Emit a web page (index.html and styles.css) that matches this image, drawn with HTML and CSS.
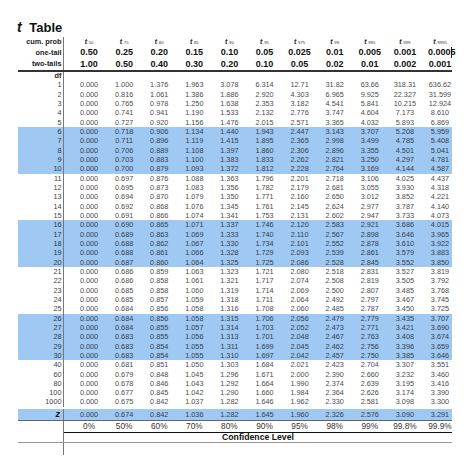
FILE: index.html
```html
<!DOCTYPE html>
<html lang="en">
<head>
<meta charset="utf-8">
<title>t Table</title>
<link rel="stylesheet" href="styles.css">
</head>
<body>
<div class="page">
  <h1 class="title"><span class="title-t">t</span> Table</h1>
  <div class="table">
    <div class="r ha"><span class="lab">cum. prob</span><span><span class="tv">t</span><span class="ts">.50</span></span><span><span class="tv">t</span><span class="ts">.75</span></span><span><span class="tv">t</span><span class="ts">.80</span></span><span><span class="tv">t</span><span class="ts">.85</span></span><span><span class="tv">t</span><span class="ts">.90</span></span><span><span class="tv">t</span><span class="ts">.95</span></span><span><span class="tv">t</span><span class="ts">.975</span></span><span><span class="tv">t</span><span class="ts">.99</span></span><span><span class="tv">t</span><span class="ts">.995</span></span><span><span class="tv">t</span><span class="ts">.999</span></span><span><span class="tv">t</span><span class="ts">.9995</span></span></div>
    <div class="r hb"><span class="lab">one-tail</span><span>0.50</span><span>0.25</span><span>0.20</span><span>0.15</span><span>0.10</span><span>0.05</span><span>0.025</span><span>0.01</span><span>0.005</span><span>0.001</span><span class="cur">0.0005</span></div>
    <div class="r hc"><span class="lab">two-tails</span><span>1.00</span><span>0.50</span><span>0.40</span><span>0.30</span><span>0.20</span><span>0.10</span><span>0.05</span><span>0.02</span><span>0.01</span><span>0.002</span><span>0.001</span></div>
    <div class="r df"><span class="lab">df</span></div>
    <div class="r"><span>1</span><span>0.000</span><span>1.000</span><span>1.376</span><span>1.963</span><span>3.078</span><span>6.314</span><span>12.71</span><span>31.82</span><span>63.66</span><span>318.31</span><span>636.62</span></div>
    <div class="r"><span>2</span><span>0.000</span><span>0.816</span><span>1.061</span><span>1.386</span><span>1.886</span><span>2.920</span><span>4.303</span><span>6.965</span><span>9.925</span><span>22.327</span><span>31.599</span></div>
    <div class="r"><span>3</span><span>0.000</span><span>0.765</span><span>0.978</span><span>1.250</span><span>1.638</span><span>2.353</span><span>3.182</span><span>4.541</span><span>5.841</span><span>10.215</span><span>12.924</span></div>
    <div class="r"><span>4</span><span>0.000</span><span>0.741</span><span>0.941</span><span>1.190</span><span>1.533</span><span>2.132</span><span>2.776</span><span>3.747</span><span>4.604</span><span>7.173</span><span>8.610</span></div>
    <div class="r"><span>5</span><span>0.000</span><span>0.727</span><span>0.920</span><span>1.156</span><span>1.476</span><span>2.015</span><span>2.571</span><span>3.365</span><span>4.032</span><span>5.893</span><span>6.869</span></div>
    <div class="r b"><span>6</span><span>0.000</span><span>0.718</span><span>0.906</span><span>1.134</span><span>1.440</span><span>1.943</span><span>2.447</span><span>3.143</span><span>3.707</span><span>5.208</span><span>5.959</span></div>
    <div class="r b"><span>7</span><span>0.000</span><span>0.711</span><span>0.896</span><span>1.119</span><span>1.415</span><span>1.895</span><span>2.365</span><span>2.998</span><span>3.499</span><span>4.785</span><span>5.408</span></div>
    <div class="r b"><span>8</span><span>0.000</span><span>0.706</span><span>0.889</span><span>1.108</span><span>1.397</span><span>1.860</span><span>2.306</span><span>2.896</span><span>3.355</span><span>4.501</span><span>5.041</span></div>
    <div class="r b"><span>9</span><span>0.000</span><span>0.703</span><span>0.883</span><span>1.100</span><span>1.383</span><span>1.833</span><span>2.262</span><span>2.821</span><span>3.250</span><span>4.297</span><span>4.781</span></div>
    <div class="r b"><span>10</span><span>0.000</span><span>0.700</span><span>0.879</span><span>1.093</span><span>1.372</span><span>1.812</span><span>2.228</span><span>2.764</span><span>3.169</span><span>4.144</span><span>4.587</span></div>
    <div class="r"><span>11</span><span>0.000</span><span>0.697</span><span>0.876</span><span>1.088</span><span>1.363</span><span>1.796</span><span>2.201</span><span>2.718</span><span>3.106</span><span>4.025</span><span>4.437</span></div>
    <div class="r"><span>12</span><span>0.000</span><span>0.695</span><span>0.873</span><span>1.083</span><span>1.356</span><span>1.782</span><span>2.179</span><span>2.681</span><span>3.055</span><span>3.930</span><span>4.318</span></div>
    <div class="r"><span>13</span><span>0.000</span><span>0.694</span><span>0.870</span><span>1.079</span><span>1.350</span><span>1.771</span><span>2.160</span><span>2.650</span><span>3.012</span><span>3.852</span><span>4.221</span></div>
    <div class="r"><span>14</span><span>0.000</span><span>0.692</span><span>0.868</span><span>1.076</span><span>1.345</span><span>1.761</span><span>2.145</span><span>2.624</span><span>2.977</span><span>3.787</span><span>4.140</span></div>
    <div class="r"><span>15</span><span>0.000</span><span>0.691</span><span>0.866</span><span>1.074</span><span>1.341</span><span>1.753</span><span>2.131</span><span>2.602</span><span>2.947</span><span>3.733</span><span>4.073</span></div>
    <div class="r b"><span>16</span><span>0.000</span><span>0.690</span><span>0.865</span><span>1.071</span><span>1.337</span><span>1.746</span><span>2.120</span><span>2.583</span><span>2.921</span><span>3.686</span><span>4.015</span></div>
    <div class="r b"><span>17</span><span>0.000</span><span>0.689</span><span>0.863</span><span>1.069</span><span>1.333</span><span>1.740</span><span>2.110</span><span>2.567</span><span>2.898</span><span>3.646</span><span>3.965</span></div>
    <div class="r b"><span>18</span><span>0.000</span><span>0.688</span><span>0.862</span><span>1.067</span><span>1.330</span><span>1.734</span><span>2.101</span><span>2.552</span><span>2.878</span><span>3.610</span><span>3.922</span></div>
    <div class="r b"><span>19</span><span>0.000</span><span>0.688</span><span>0.861</span><span>1.066</span><span>1.328</span><span>1.729</span><span>2.093</span><span>2.539</span><span>2.861</span><span>3.579</span><span>3.883</span></div>
    <div class="r b"><span>20</span><span>0.000</span><span>0.687</span><span>0.860</span><span>1.064</span><span>1.325</span><span>1.725</span><span>2.086</span><span>2.528</span><span>2.845</span><span>3.552</span><span>3.850</span></div>
    <div class="r"><span>21</span><span>0.000</span><span>0.686</span><span>0.859</span><span>1.063</span><span>1.323</span><span>1.721</span><span>2.080</span><span>2.518</span><span>2.831</span><span>3.527</span><span>3.819</span></div>
    <div class="r"><span>22</span><span>0.000</span><span>0.686</span><span>0.858</span><span>1.061</span><span>1.321</span><span>1.717</span><span>2.074</span><span>2.508</span><span>2.819</span><span>3.505</span><span>3.792</span></div>
    <div class="r"><span>23</span><span>0.000</span><span>0.685</span><span>0.858</span><span>1.060</span><span>1.319</span><span>1.714</span><span>2.069</span><span>2.500</span><span>2.807</span><span>3.485</span><span>3.768</span></div>
    <div class="r"><span>24</span><span>0.000</span><span>0.685</span><span>0.857</span><span>1.059</span><span>1.318</span><span>1.711</span><span>2.064</span><span>2.492</span><span>2.797</span><span>3.467</span><span>3.745</span></div>
    <div class="r"><span>25</span><span>0.000</span><span>0.684</span><span>0.856</span><span>1.058</span><span>1.316</span><span>1.708</span><span>2.060</span><span>2.485</span><span>2.787</span><span>3.450</span><span>3.725</span></div>
    <div class="r b"><span>26</span><span>0.000</span><span>0.684</span><span>0.856</span><span>1.058</span><span>1.315</span><span>1.706</span><span>2.056</span><span>2.479</span><span>2.779</span><span>3.435</span><span>3.707</span></div>
    <div class="r b"><span>27</span><span>0.000</span><span>0.684</span><span>0.855</span><span>1.057</span><span>1.314</span><span>1.703</span><span>2.052</span><span>2.473</span><span>2.771</span><span>3.421</span><span>3.690</span></div>
    <div class="r b"><span>28</span><span>0.000</span><span>0.683</span><span>0.855</span><span>1.056</span><span>1.313</span><span>1.701</span><span>2.048</span><span>2.467</span><span>2.763</span><span>3.408</span><span>3.674</span></div>
    <div class="r b"><span>29</span><span>0.000</span><span>0.683</span><span>0.854</span><span>1.055</span><span>1.311</span><span>1.699</span><span>2.045</span><span>2.462</span><span>2.756</span><span>3.396</span><span>3.659</span></div>
    <div class="r b"><span>30</span><span>0.000</span><span>0.683</span><span>0.854</span><span>1.055</span><span>1.310</span><span>1.697</span><span>2.042</span><span>2.457</span><span>2.750</span><span>3.385</span><span>3.646</span></div>
    <div class="r"><span>40</span><span>0.000</span><span>0.681</span><span>0.851</span><span>1.050</span><span>1.303</span><span>1.684</span><span>2.021</span><span>2.423</span><span>2.704</span><span>3.307</span><span>3.551</span></div>
    <div class="r"><span>60</span><span>0.000</span><span>0.679</span><span>0.848</span><span>1.045</span><span>1.296</span><span>1.671</span><span>2.000</span><span>2.390</span><span>2.660</span><span>3.232</span><span>3.460</span></div>
    <div class="r"><span>80</span><span>0.000</span><span>0.678</span><span>0.846</span><span>1.043</span><span>1.292</span><span>1.664</span><span>1.990</span><span>2.374</span><span>2.639</span><span>3.195</span><span>3.416</span></div>
    <div class="r"><span>100</span><span>0.000</span><span>0.677</span><span>0.845</span><span>1.042</span><span>1.290</span><span>1.660</span><span>1.984</span><span>2.364</span><span>2.626</span><span>3.174</span><span>3.390</span></div>
    <div class="r"><span>1000</span><span>0.000</span><span>0.675</span><span>0.842</span><span>1.037</span><span>1.282</span><span>1.646</span><span>1.962</span><span>2.330</span><span>2.581</span><span>3.098</span><span>3.300</span></div>
    <div class="r b zr"><span class="zl">z</span><span>0.000</span><span>0.674</span><span>0.842</span><span>1.036</span><span>1.282</span><span>1.645</span><span>1.960</span><span>2.326</span><span>2.576</span><span>3.090</span><span>3.291</span></div>
    <div class="r pr"><span></span><span>0%</span><span>50%</span><span>60%</span><span>70%</span><span>80%</span><span>90%</span><span>95%</span><span>98%</span><span>99%</span><span>99.8%</span><span>99.9%</span></div>
    <div class="r cr"><span></span><span class="conf">Confidence Level</span></div>
    <div class="tail"></div>
  </div>
</div>
</body>
</html>
```

FILE: styles.css
```css
html, body {
  margin: 0;
  padding: 0;
  background: #ffffff;
}

body {
  font-family: "Liberation Sans", Arial, sans-serif;
  color: #4a4a4a;
}

.page {
  padding-top: 20px;
}

.title {
  margin: 0 0 2px 17px;
  font-size: 13px;
  line-height: 15px;
  font-weight: bold;
  color: #111111;
}

.title-t {
  font-size: 14px;
  font-style: italic;
  margin-right: 4px;
}

.table {
  margin-left: 18px;
  width: 434px;
}

.r {
  display: grid;
  grid-template-columns: 46px 42.6px repeat(9, 35.1px) 29.5px;
  height: 9.33px;
  line-height: 9.33px;
  font-size: 7.3px;
  color: #4d4d4d;
}

.r > span {
  text-align: center;
  white-space: nowrap;
  overflow: visible;
}

.r > span:first-child {
  text-align: right;
  padding-right: 1.5px;
  border-right: 1px solid #777777;
  color: #444444;
}

.r > span:nth-child(2) {
  padding-left: 7.5px;
}

.r > span:last-child {
  padding-left: 5.6px;
}

.b {
  background: #9fc9f3;
  color: #34404e;
}

.b > span:first-child {
  color: #2c3644;
}

.lab {
  font-weight: bold;
  color: #222222 !important;
}

.ha {
  height: 10px;
  line-height: 10px;
}

.tv {
  font-style: italic;
  font-weight: bold;
  font-size: 7px;
  color: #222222;
}

.ts {
  font-size: 4.3px;
  color: #333333;
  margin-left: 0.5px;
}

.hb {
  height: 11px;
  line-height: 11px;
  font-size: 9px;
  font-weight: bold;
  color: #111111;
}

.hc {
  height: 12px;
  line-height: 12px;
  font-size: 9px;
  font-weight: bold;
  color: #111111;
  border-bottom: 2px solid #333333;
}

.hb > .lab,
.hc > .lab {
  font-size: 7.3px;
}

.r > span.cur {
  border-right: 1px solid #222222;
}

.df {
  height: 8.33px;
  line-height: 8.33px;
}

.zr {
  margin-top: 2px;
  height: 11px;
  line-height: 11px;
  border-bottom: 1px solid #666666;
}

.r > span.zl {
  font-size: 9px;
  font-style: italic;
  font-weight: bold;
  color: #111111;
  padding-right: 3px;
}

.pr {
  height: 12.5px;
  line-height: 11px;
  font-size: 8.3px;
  color: #333333;
}

.pr > span {
  border-bottom: 1.5px solid #111111;
}

.pr > span:first-child {
  border-bottom: none;
}

.cr {
  height: 9px;
  line-height: 9px;
  border-bottom: 1px solid #9a9a9a;
}

.r > span.conf {
  grid-column: 2 / -1;
  padding: 0;
  font-size: 8.7px;
  font-weight: bold;
  color: #111111;
}

.tail {
  width: 45px;
  height: 12px;
  border-right: 1px solid #777777;
}
```
